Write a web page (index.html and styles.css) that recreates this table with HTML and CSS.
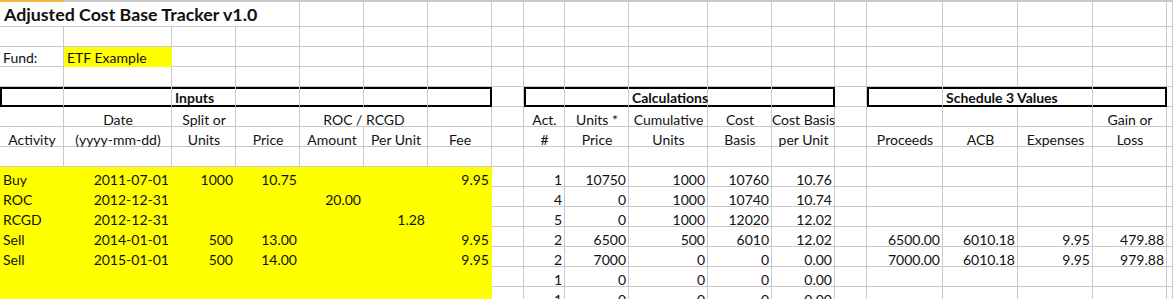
FILE: index.html
```html
<!DOCTYPE html>
<html>
<head>
<meta charset="utf-8">
<title>Adjusted Cost Base Tracker v1.0</title>
<link rel="stylesheet" href="styles.css">
</head>
<body>
<div class="sheet">
  <!-- row 1 -->
  <span class="title top">Adjusted Cost Base Tracker v1.0</span>
  <span class="top"></span><span class="top"></span><span class="top"></span><span class="top"></span><span class="top"></span>
  <span class="top"></span><span class="top"></span><span class="top"></span><span class="top"></span><span class="top"></span>
  <span class="top"></span><span class="top"></span><span class="top"></span><span class="top"></span><span class="top"></span>
  <!-- row 2 -->
  <span></span><span></span><span></span><span></span><span></span><span></span><span></span><span></span><span></span><span></span>
  <span></span><span></span><span></span><span></span><span></span><span></span><span></span><span></span><span></span>
  <!-- row 3 -->
  <span class="up">Fund:</span><span class="y up">ETF Example</span>
  <span></span><span></span><span></span><span></span><span></span><span></span><span></span><span></span><span></span>
  <span></span><span></span><span></span><span></span><span></span><span></span><span></span><span></span>
  <!-- row 4 -->
  <span></span><span></span><span></span><span></span><span></span><span></span><span></span><span></span><span></span><span></span>
  <span></span><span></span><span></span><span></span><span></span><span></span><span></span><span></span><span></span>
  <!-- row 5 -->
  <span class="bl"></span><span class="bx"></span><span class="bx b">Inputs</span><span class="bx"></span><span class="bx"></span><span class="bx"></span><span class="br"></span>
  <span></span>
  <span class="bl"></span><span class="bx"></span><span class="bx b">Calculations</span><span class="bx"></span><span class="br"></span>
  <span></span>
  <span class="bl"></span><span class="bx b s2">Schedule 3 Values</span><span class="br"></span>
  <span></span>
  <!-- row 6 -->
  <span></span><span class="m">Date</span><span class="m">Split or</span><span></span><span class="m s2">ROC / RCGD</span><span></span>
  <span></span>
  <span class="m">Act.</span><span class="m">Units *</span><span class="m">Cumulative</span><span class="m">Cost</span><span class="m">Cost Basis</span>
  <span></span>
  <span></span><span></span><span></span><span class="m">Gain or</span>
  <span></span>
  <!-- row 7 -->
  <span class="m">Activity</span><span class="m">(yyyy-mm-dd)</span><span class="m">Units</span><span class="m">Price</span><span class="m">Amount</span><span class="m">Per Unit</span><span class="m">Fee</span>
  <span></span>
  <span class="m">#</span><span class="m">Price</span><span class="m">Units</span><span class="m">Basis</span><span class="m">per Unit</span>
  <span></span>
  <span class="m">Proceeds</span><span class="m">ACB</span><span class="m">Expenses</span><span class="m">Loss</span>
  <span></span>
  <!-- row 8 -->
  <span></span><span></span><span></span><span></span><span></span><span></span><span></span><span></span><span></span><span></span>
  <span></span><span></span><span></span><span></span><span></span><span></span><span></span><span></span><span></span>
  <!-- row 9 -->
  <span class="y">Buy</span><span class="y r">2011-07-01</span><span class="y r">1000</span><span class="y r">10.75</span><span class="y"></span><span class="y"></span><span class="y r">9.95</span>
  <span></span>
  <span class="r">1</span><span class="r">10750</span><span class="r">1000</span><span class="r">10760</span><span class="r">10.76</span>
  <span></span>
  <span></span><span></span><span></span><span></span>
  <span></span>
  <!-- row 10 -->
  <span class="y">ROC</span><span class="y r">2012-12-31</span><span class="y"></span><span class="y"></span><span class="y r">20.00</span><span class="y"></span><span class="y"></span>
  <span></span>
  <span class="r">4</span><span class="r">0</span><span class="r">1000</span><span class="r">10740</span><span class="r">10.74</span>
  <span></span>
  <span></span><span></span><span></span><span></span>
  <span></span>
  <!-- row 11 -->
  <span class="y">RCGD</span><span class="y r">2012-12-31</span><span class="y"></span><span class="y"></span><span class="y"></span><span class="y r">1.28</span><span class="y"></span>
  <span></span>
  <span class="r">5</span><span class="r">0</span><span class="r">1000</span><span class="r">12020</span><span class="r">12.02</span>
  <span></span>
  <span></span><span></span><span></span><span></span>
  <span></span>
  <!-- row 12 -->
  <span class="y">Sell</span><span class="y r">2014-01-01</span><span class="y r">500</span><span class="y r">13.00</span><span class="y"></span><span class="y"></span><span class="y r">9.95</span>
  <span></span>
  <span class="r">2</span><span class="r">6500</span><span class="r">500</span><span class="r">6010</span><span class="r">12.02</span>
  <span></span>
  <span class="r">6500.00</span><span class="r">6010.18</span><span class="r">9.95</span><span class="r">479.88</span>
  <span></span>
  <!-- row 13 -->
  <span class="y">Sell</span><span class="y r">2015-01-01</span><span class="y r">500</span><span class="y r">14.00</span><span class="y"></span><span class="y"></span><span class="y r">9.95</span>
  <span></span>
  <span class="r">2</span><span class="r">7000</span><span class="r">0</span><span class="r">0</span><span class="r">0.00</span>
  <span></span>
  <span class="r">7000.00</span><span class="r">6010.18</span><span class="r">9.95</span><span class="r">979.88</span>
  <span></span>
  <!-- row 14 -->
  <span class="y"></span><span class="y"></span><span class="y"></span><span class="y"></span><span class="y"></span><span class="y"></span><span class="y"></span>
  <span></span>
  <span class="r">1</span><span class="r">0</span><span class="r">0</span><span class="r">0</span><span class="r">0.00</span>
  <span></span>
  <span></span><span></span><span></span><span></span>
  <span></span>
  <!-- row 15 -->
  <span class="y"></span><span class="y"></span><span class="y"></span><span class="y"></span><span class="y"></span><span class="y"></span><span class="y"></span>
  <span></span>
  <span class="r">1</span><span class="r">0</span><span class="r">0</span><span class="r">0</span><span class="r">0.00</span>
  <span></span>
  <span></span><span></span><span></span><span></span>
  <span></span>
</div>
</body>
</html>
```

FILE: styles.css
```css
html, body {
  margin: 0;
  padding: 0;
  background: #ffffff;
  overflow: hidden;
}

.sheet {
  display: grid;
  grid-template-columns: 64px 108px 64px 64px 64px 64px 64px 32px 41px 64px 79px 64px 63px 32px 76px 75px 75px 74px 6px;
  grid-template-rows: 27px;
  grid-auto-rows: 20px;
  font-family: Lato, "Open Sans", sans-serif;
  font-size: 14px;
  color: #111111;
}

.sheet > * {
  display: flex;
  align-items: flex-end;
  justify-content: flex-start;
  box-sizing: border-box;
  min-width: 0;
  padding: 0 2px 0 3px;
  line-height: 12px;
  white-space: nowrap;
  border-right: 1px solid #c9c9c9;
  border-bottom: 1px solid #c9c9c9;
}

.sheet > .top {
  border-top: 2px solid #c9c9c9;
}

.sheet > .title {
  grid-column: span 4;
  font-weight: bold;
  font-size: 17.8px;
  line-height: 22px;
  padding-bottom: 1px;
  padding-left: 4px;
  border-top: 2px solid transparent;
  background: linear-gradient(to right, #f3b63f 64px, #c9c9c9 64px) 0 0 / 100% 2px no-repeat border-box;
}

.sheet > .up {
  padding-bottom: 2px;
}

.s2 {
  grid-column: span 2;
}

.r {
  justify-content: flex-end;
}

.m {
  justify-content: center;
}

.sheet > .b {
  font-weight: bold;
  padding-bottom: 2px;
}

.sheet > .y {
  background: #ffff00;
  border-color: #ffff00;
}

.sheet > .bx {
  border-bottom-color: #000000;
  box-shadow: inset 0 2px 0 #000000, inset 0 -1px 0 #000000;
}

.sheet > .bl {
  border-bottom-color: #000000;
  box-shadow: inset 2px 0 0 #000000, inset 0 2px 0 #000000, inset 0 -1px 0 #000000;
}

.sheet > .br {
  border-bottom-color: #000000;
  border-right-color: #000000;
  box-shadow: inset -1px 0 0 #000000, inset 0 2px 0 #000000, inset 0 -1px 0 #000000;
}
```
